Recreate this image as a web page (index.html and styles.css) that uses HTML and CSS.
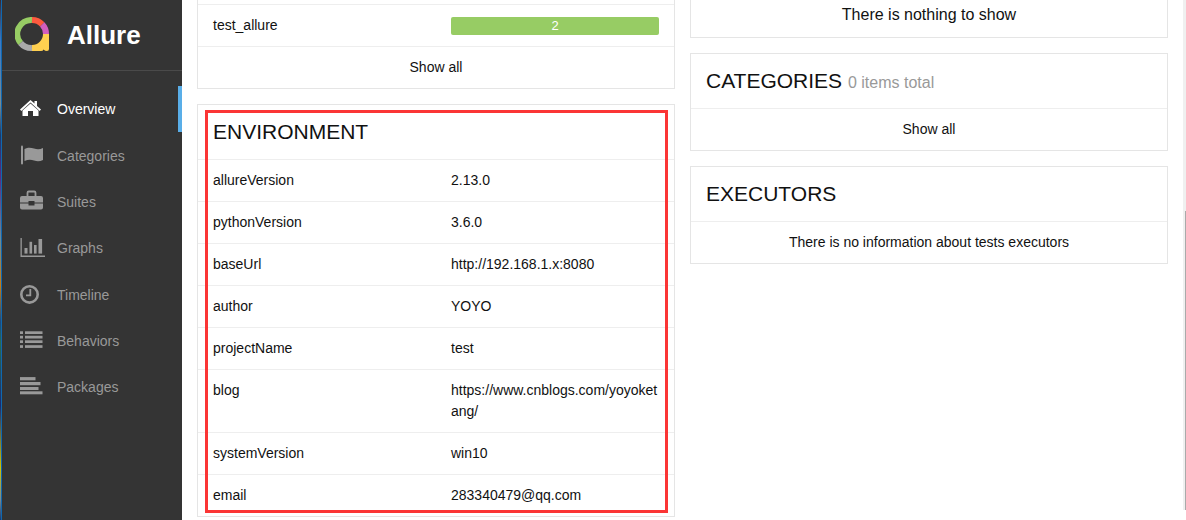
FILE: index.html
```html
<!DOCTYPE html>
<html lang="en">
<head>
<meta charset="utf-8">
<title>Allure Report</title>
<link rel="stylesheet" href="styles.css">
</head>
<body>
<div class="app">
  <div class="desk-strip"></div>
  <aside class="sidebar">
    <div class="brand">
      <svg class="logo" width="36" height="36" viewBox="0 0 36 36">
        <path class="arc-green" d="M5.6 26 A14 14 0 0 1 17 3"/>
        <path class="arc-gray" d="M17 31 A14 14 0 0 1 5.6 26"/>
        <path class="arc-red" d="M17 3 A14 14 0 0 1 27.2 7.4"/>
        <path class="arc-purple" d="M27.2 7.4 A14 14 0 0 1 31 17"/>
        <path class="logo-yellow" d="M34 17 H28 A11 11 0 0 1 17 28 V34 H26 Q28 34 28.5 32.5 Q30 34 32 34 Q34 34 34 32 Z"/>
      </svg>
      <span class="brand-name">Allure</span>
    </div>
    <nav class="nav">
      <a class="nav-item active">
        <svg class="nav-icon" width="26" height="24" viewBox="0 0 26 24"><path d="M10.5 3 L0 12.5 L1.3 13.9 L10.5 5.5 L19.7 13.9 L21 12.5 L17 9 V4 H14.5 V6.4 Z"/><path d="M2.5 13.5 L10.5 6.5 L18.5 13.5 V19 H13 V14 H8 V19 H2.5 Z"/></svg>
        <span class="nav-label">Overview</span>
      </a>
      <a class="nav-item">
        <svg class="nav-icon" width="26" height="24" viewBox="0 0 26 24"><rect x="1" y="2.6" width="2" height="19" rx="1"/><path d="M4.5 6 C8 4 11 4.500 14 5.500 C17 6.500 20 6.500 23 5 V17 C20 18.500 17 18.500 14 17.500 C11 16.500 8 16.500 4.500 18 Z"/></svg>
        <span class="nav-label">Categories</span>
      </a>
      <a class="nav-item">
        <svg class="nav-icon" width="26" height="24" viewBox="0 0 26 24"><path d="M0 8 A2 2 0 0 1 2 6 H21 A2 2 0 0 1 23 8 V12.500 H14.500 V11 H8.500 V12.500 H0 Z"/><path d="M0 13.500 H8.500 V15.500 H14.500 V13.500 H23 V17.500 A2 2 0 0 1 21 19.500 H2 A2 2 0 0 1 0 17.500 Z"/><path class="icon-line" d="M7.500 6 V2.800 A1.300 1.300 0 0 1 8.800 1.500 H14.200 A1.300 1.300 0 0 1 15.500 2.800 V6"/></svg>
        <span class="nav-label">Suites</span>
      </a>
      <a class="nav-item">
        <svg class="nav-icon" width="26" height="24" viewBox="0 0 26 24"><path d="M0.500 2 H1.800 V19.500 H25 V21 H0.500 Z"/><rect x="4.500" y="12" width="3" height="5.600"/><rect x="9.500" y="5.800" width="2.600" height="11.800"/><rect x="14" y="9" width="2.600" height="8.600"/><rect x="18.500" y="3" width="3.600" height="14.600"/></svg>
        <span class="nav-label">Graphs</span>
      </a>
      <a class="nav-item">
        <svg class="nav-icon" width="26" height="24" viewBox="0 0 26 24"><circle class="icon-line wide" cx="9.500" cy="12.400" r="8.200"/><path class="icon-line" d="M10.300 7 V13.400 H6"/></svg>
        <span class="nav-label">Timeline</span>
      </a>
      <a class="nav-item">
        <svg class="nav-icon" width="26" height="24" viewBox="0 0 26 24"><rect x="0" y="2.300" width="3" height="2.700"/><rect x="5" y="2.300" width="17.500" height="2.700"/><rect x="0" y="6.800" width="3" height="2.700"/><rect x="5" y="6.800" width="17.500" height="2.700"/><rect x="0" y="11.300" width="3" height="2.700"/><rect x="5" y="11.300" width="17.500" height="2.700"/><rect x="0" y="16.200" width="3" height="2.700"/><rect x="5" y="16.200" width="17.500" height="2.700"/></svg>
        <span class="nav-label">Behaviors</span>
      </a>
      <a class="nav-item">
        <svg class="nav-icon" width="26" height="24" viewBox="0 0 26 24"><rect x="0" y="2.100" width="15.500" height="3.200"/><rect x="0" y="7" width="20.500" height="3.200"/><rect x="0" y="12" width="18.500" height="3"/><rect x="0" y="16.300" width="22.500" height="3"/></svg>
        <span class="nav-label">Packages</span>
      </a>
    </nav>
  </aside>
  <main class="content">
    <div class="col">
      <section class="card cut">
        <div class="row stub"></div>
        <div class="row">
          <div>test_allure</div>
          <div class="bar">2</div>
        </div>
        <div class="row center">Show all</div>
      </section>
      <section class="card boxed">
        <h2 class="card-title">ENVIRONMENT</h2>
        <div class="row"><div>allureVersion</div><div class="value">2.13.0</div></div>
        <div class="row"><div>pythonVersion</div><div class="value">3.6.0</div></div>
        <div class="row"><div>baseUrl</div><div class="value">http://192.168.1.x:8080</div></div>
        <div class="row"><div>author</div><div class="value">YOYO</div></div>
        <div class="row"><div>projectName</div><div class="value">test</div></div>
        <div class="row"><div>blog</div><div class="value">https://www.cnblogs.com/yoyoketang/</div></div>
        <div class="row"><div>systemVersion</div><div class="value">win10</div></div>
        <div class="row last"><div>email</div><div class="value">283340479@qq.com</div></div>
        <div class="highlight"></div>
      </section>
    </div>
    <div class="col">
      <section class="card cut">
        <div class="empty">There is nothing to show</div>
      </section>
      <section class="card">
        <h2 class="card-title">CATEGORIES <small class="count">0 items total</small></h2>
        <div class="row center last">Show all</div>
      </section>
      <section class="card">
        <h2 class="card-title">EXECUTORS</h2>
        <div class="row center last">There is no information about tests executors</div>
      </section>
    </div>
  </main>
  <div class="scrollbar"><div class="thumb"></div></div>
</div>
</body>
</html>
```

FILE: styles.css
```css
* { box-sizing: border-box; }
html, body { margin: 0; height: 100%; overflow: hidden; }
body {
  background: #fff;
  color: #111;
  font: 14px/21px "Liberation Sans", Arial, sans-serif;
}
.app { display: flex; height: 520px; }

.desk-strip {
  flex: 0 0 2px;
  background: linear-gradient(#0f68b0, #0f68b0) right / 1px 100% no-repeat,
    linear-gradient(#3a2a30 0, #3a7ac8 8%, #7a8a90 20%, #1a3a6a 26%, #5a2a80 34%, #6a8a98 46%, #c87a10 55%, #1a4a80 62%, #2a6a50 66%, #1a2a70 78%, #d0c000 90%, #7a8a90 96%, #1a3a70 100%);
}
.sidebar {
  flex: 0 0 180px;
  background: #343434;
  color: #999;
}
.brand {
  display: flex;
  align-items: center;
  height: 71px;
  padding-left: 13px;
  border-bottom: 1px solid #4a4a4a;
}
.logo { display: block; flex: none; margin-right: 16px; }
.arc-green, .arc-gray, .arc-red, .arc-purple { fill: none; stroke-width: 6; }
.arc-green { stroke: #97cc64; }
.arc-gray { stroke: #aaa; }
.arc-red { stroke: #fd5a3e; }
.arc-purple { stroke: #d35ebe; }
.logo-yellow { fill: #ffd050; }
.brand-name { color: #fff; font-size: 26px; font-weight: 700; line-height: 30px; }

.nav { padding-top: 15px; }
.nav-item {
  display: flex;
  align-items: center;
  height: 46.3px;
  padding-left: 18px;
  color: #999;
}
.nav-item.active { color: #fff; border-right: 4px solid #59aee8; }
.nav-icon { display: block; flex: none; margin-right: 11px; fill: currentColor; }
.nav-label { padding-top: 1.5px; }
.icon-line { fill: none; stroke: currentColor; stroke-width: 1.800; }
.icon-line.wide { stroke-width: 2.600; }

.content {
  flex: 1;
  display: flex;
  gap: 15px;
  padding: 0 15px;
  min-width: 0;
}
.col {
  flex: 0 0 478px;
  display: flex;
  flex-direction: column;
  gap: 15px;
}
.scrollbar {
  flex: 0 0 3px;
  height: 510px;
  background: #f0f0f0;
  padding-top: 211px;
}
.thumb { height: 299px; width: 1px; margin-left: 2px; background: #aaa; }

.card {
  position: relative;
  border: 1px solid #e5e5e5;
  background: #fff;
}
.card.cut { border-top: 0; }
.card-title {
  margin: 0;
  height: 55px;
  padding: 10px 15px;
  border-bottom: 1px solid #eee;
  font-size: 21px;
  font-weight: 400;
  line-height: 34px;
  color: #111;
}
.count { font-size: 16px; color: #999; }

.row {
  display: grid;
  grid-template-columns: 223px 208px;
  column-gap: 15px;
  padding: 10px 15px;
  border-bottom: 1px solid #eee;
}
.card > .row:last-child,
.row.last { border-bottom: 0; }
.row.stub { display: block; height: 5px; padding: 0; }
.row.center { display: block; text-align: center; }
.value { word-break: break-all; }
.bar {
  align-self: center;
  height: 18px;
  border-radius: 2px;
  background: #97cc64;
  color: #fff;
  font-size: 13px;
  line-height: 18px;
  text-align: center;
}
.empty { height: 37px; padding-top: 4px; font-size: 16px; line-height: 21px; text-align: center; }

.highlight {
  position: absolute;
  left: 7px;
  top: 5px;
  width: 463px;
  height: 403px;
  border: 3px solid #fb3535;
  pointer-events: none;
}
```
